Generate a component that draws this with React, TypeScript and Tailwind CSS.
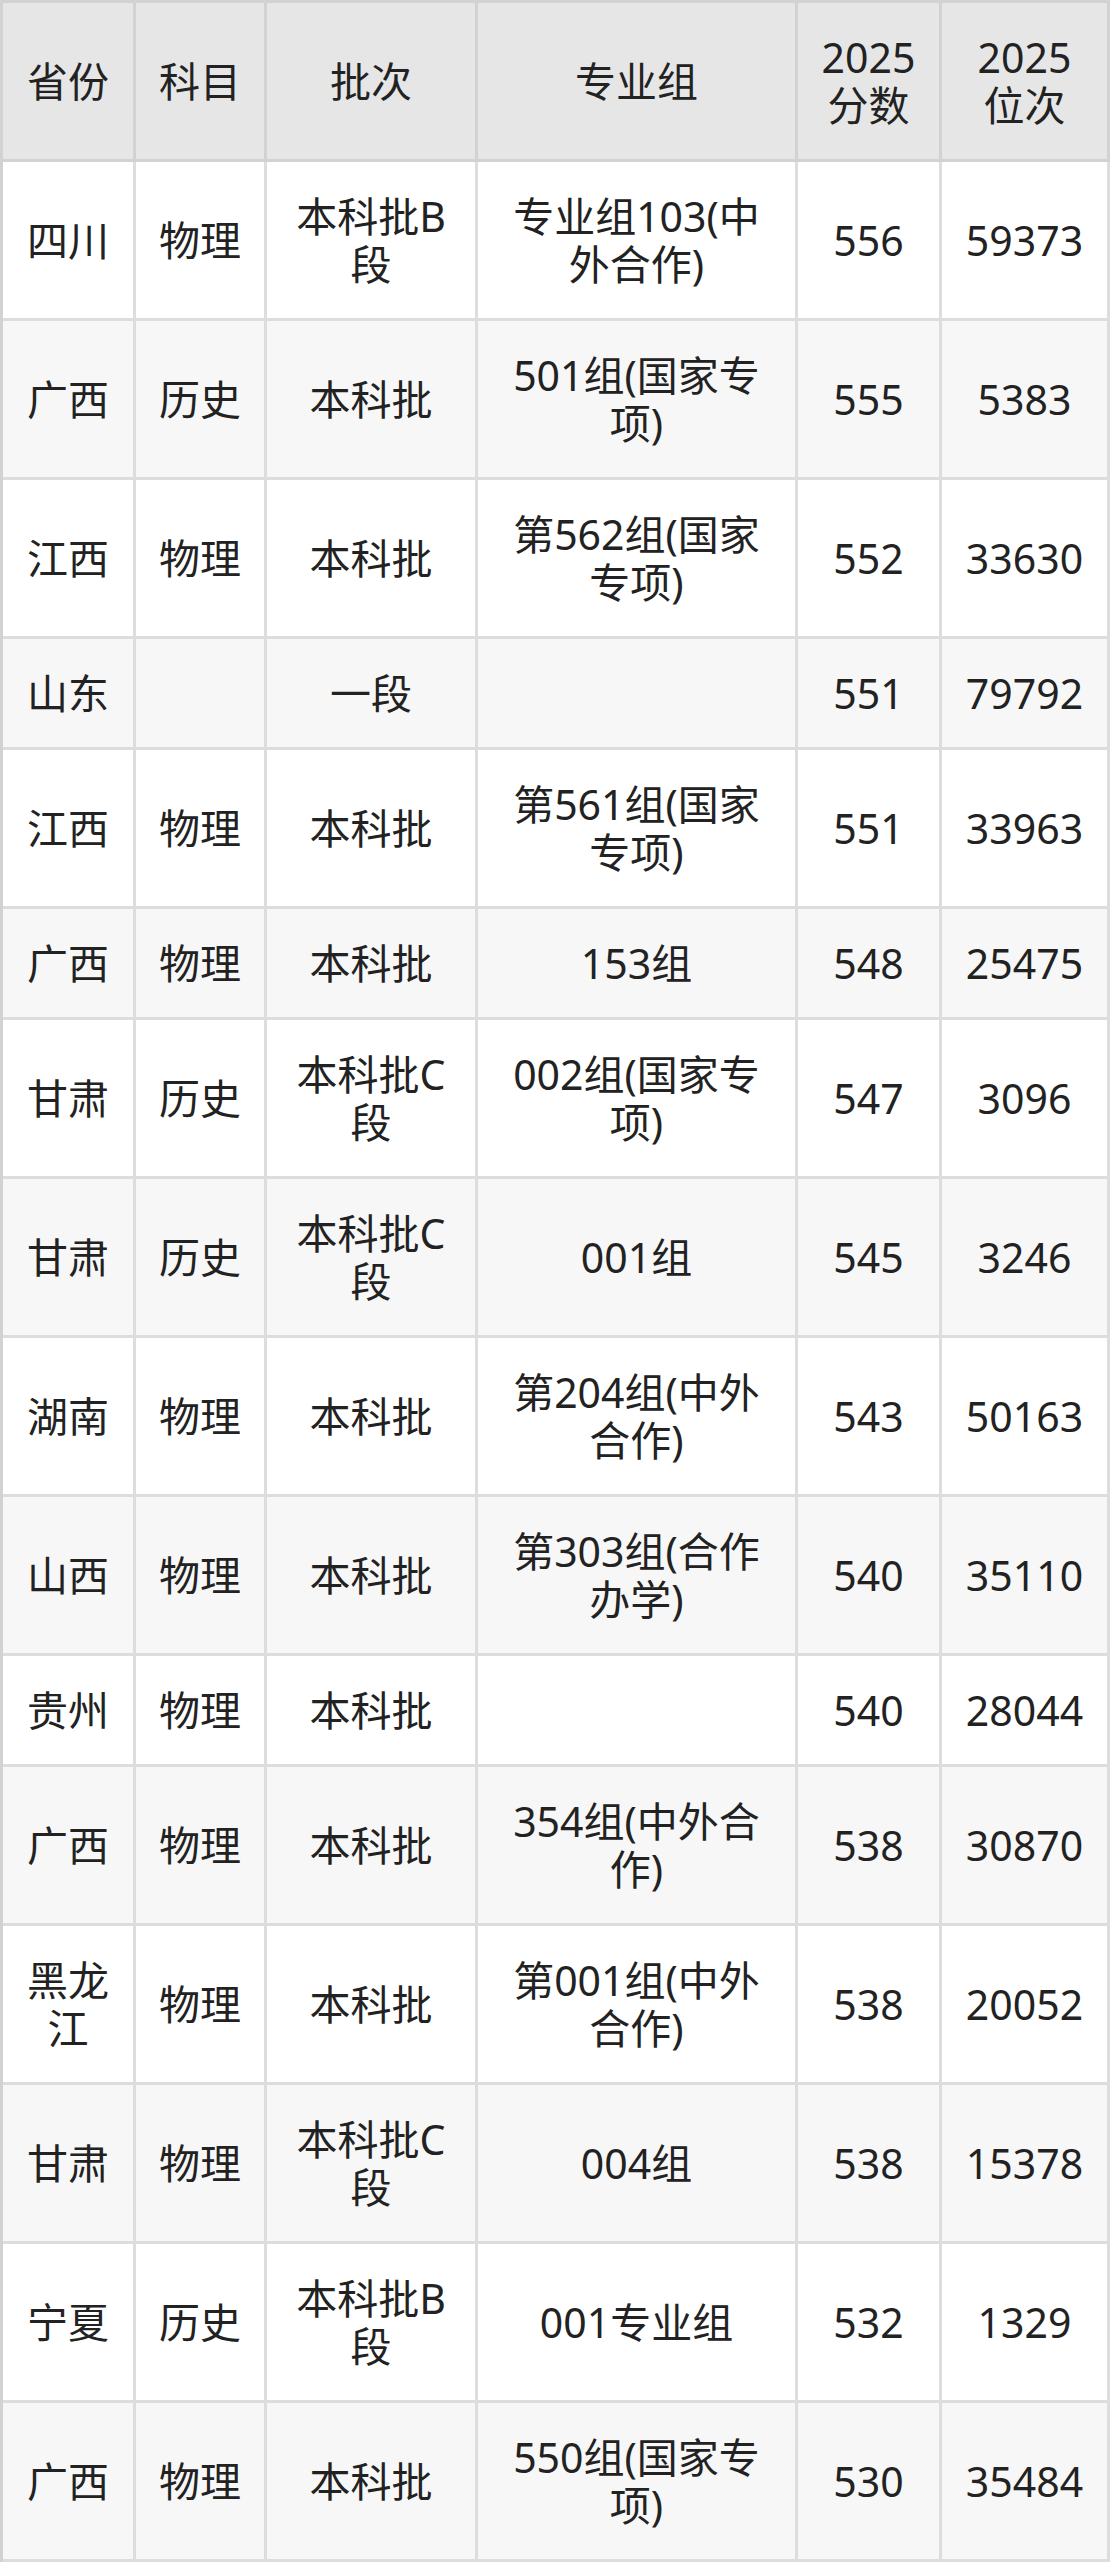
import React from "react";

type Row = [string, string, string, string, string, string];

const head: Row = ["省份", "科目", "批次", "专业组", "2025分数", "2025位次"];

const rows: Row[] = [
  ["四川", "物理", "本科批B段", "专业组103(中外合作)", "556", "59373"],
  ["广西", "历史", "本科批", "501组(国家专项)", "555", "5383"],
  ["江西", "物理", "本科批", "第562组(国家专项)", "552", "33630"],
  ["山东", "", "一段", "", "551", "79792"],
  ["江西", "物理", "本科批", "第561组(国家专项)", "551", "33963"],
  ["广西", "物理", "本科批", "153组", "548", "25475"],
  ["甘肃", "历史", "本科批C段", "002组(国家专项)", "547", "3096"],
  ["甘肃", "历史", "本科批C段", "001组", "545", "3246"],
  ["湖南", "物理", "本科批", "第204组(中外合作)", "543", "50163"],
  ["山西", "物理", "本科批", "第303组(合作办学)", "540", "35110"],
  ["贵州", "物理", "本科批", "", "540", "28044"],
  ["广西", "物理", "本科批", "354组(中外合作)", "538", "30870"],
  ["黑龙江", "物理", "本科批", "第001组(中外合作)", "538", "20052"],
  ["甘肃", "物理", "本科批C段", "004组", "538", "15378"],
  ["宁夏", "历史", "本科批B段", "001专业组", "532", "1329"],
  ["广西", "物理", "本科批", "550组(国家专项)", "530", "35484"],
];

const cell =
  "flex items-center justify-center text-center px-5 py-[30px] border-r-[3px] border-b-[3px]";

export default function App() {
  return (
    <div
      className="w-[1110px] bg-white text-[#222] text-[41px] leading-[48px]"
      style={{ fontFamily: '"Noto Sans", "Noto Sans CJK SC", sans-serif' }}
    >
      <div className="grid grid-cols-[133px_131px_211px_320px_144px_168px] border-t-[3px] border-l-[3px] border-[#d2d2d2]">
        {head.map((h, i) => (
          <div key={"h" + i} className={`${cell} bg-[#e6e6e6] border-[#d2d2d2]`}>
            {h}
          </div>
        ))}
        {rows.map((r, ri) =>
          r.map((c, ci) => (
            <div
              key={ri + "-" + ci}
              className={`${cell} border-[#dddddd] ${ri % 2 === 0 ? "bg-white" : "bg-[#f7f7f7]"}`}
            >
              {c}
            </div>
          ))
        )}
      </div>
    </div>
  );
}
